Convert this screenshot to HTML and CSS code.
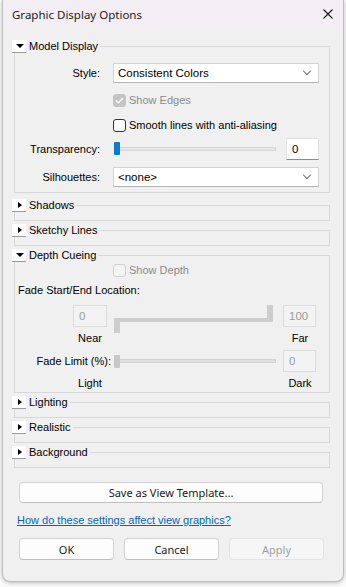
FILE: index.html
```html
<!doctype html>
<html lang="en">
  <head>
    <meta name="viewport" content="width=device-width">
    <title>Graphic Display Options</title>
    <link rel="stylesheet" href="styles.css">
  </head>
  <body>
    <div class="dialog">
      <div class="titlebar">
        <span class="title">Graphic Display Options</span>
        <svg class="close" width="10" height="10" viewBox="0 0 10 10"><path d="M0.5 0.5L9.5 9.5M9.5 0.5L0.5 9.5" stroke="#1a1a1a" stroke-width="1.1"/></svg>
      </div>

      <div class="groups">
        <!-- Model Display -->
        <div class="group model">
          <div class="group-head">
            <span class="toggle"><i class="tri-down"></i></span>
            <span class="group-label">Model Display</span>
          </div>

          <div class="form">
            <label class="lbl row-style">Style:</label>
            <div class="select row-style">Consistent Colors<i class="chev"></i></div>

            <div class="ctl row-edges">
              <span class="check checked disabled"><svg width="9" height="7" viewBox="0 0 9 7"><path d="M1 3.5L3.5 6L8 1" fill="none" stroke="#fff" stroke-width="1.2"/></svg></span>
              <span class="muted">Show Edges</span>
            </div>

            <div class="ctl row-smooth">
              <span class="check"></span>
              <span>Smooth lines with anti-aliasing</span>
            </div>

            <label class="lbl row-trans">Transparency:</label>
            <div class="ctl row-trans slider-row">
              <div class="slider">
                <div class="track"></div>
                <div class="thumb blue"></div>
              </div>
              <div class="num">0</div>
            </div>

            <label class="lbl row-sil">Silhouettes:</label>
            <div class="select row-sil">&lt;none&gt;<i class="chev"></i></div>
          </div>
        </div>

        <div class="group collapsed first">
          <div class="group-head">
            <span class="toggle"><i class="tri-right"></i></span>
            <span class="group-label">Shadows</span>
          </div>
        </div>

        <div class="group collapsed">
          <div class="group-head">
            <span class="toggle"><i class="tri-right"></i></span>
            <span class="group-label">Sketchy Lines</span>
          </div>
        </div>

        <!-- Depth Cueing -->
        <div class="group depth">
          <div class="group-head">
            <span class="toggle"><i class="tri-down"></i></span>
            <span class="group-label">Depth Cueing</span>
          </div>

          <div class="ctl show-depth">
            <span class="check disabled"></span>
            <span class="muted">Show Depth</span>
          </div>

          <div class="fade-title">Fade Start/End Location:</div>

          <div class="dgrid fade-loc">
            <div class="num off near">0</div>
            <svg class="range" width="162" height="29" viewBox="0 0 162 29">
              <rect x="0" y="13" width="159" height="4" fill="#cdcdcd"/>
              <rect x="0" y="13" width="6" height="15" fill="#cdcdcd"/>
              <rect x="153" y="0" width="6" height="17" fill="#cdcdcd"/>
            </svg>
            <div class="num off">100</div>
          </div>

          <div class="dgrid ends">
            <span class="end">Near</span>
            <span></span>
            <span class="end">Far</span>
          </div>

          <div class="dgrid fade-limit">
            <label class="lbl limit">Fade Limit (%):</label>
            <div class="slider">
              <div class="track grey"></div>
              <div class="thumb grey"></div>
            </div>
            <div class="num off">0</div>
          </div>

          <div class="dgrid ends">
            <span class="end">Light</span>
            <span></span>
            <span class="end">Dark</span>
          </div>
        </div>

        <div class="group collapsed">
          <div class="group-head">
            <span class="toggle"><i class="tri-right"></i></span>
            <span class="group-label">Lighting</span>
          </div>
        </div>

        <div class="group collapsed">
          <div class="group-head">
            <span class="toggle"><i class="tri-right"></i></span>
            <span class="group-label">Realistic</span>
          </div>
        </div>

        <div class="group collapsed">
          <div class="group-head">
            <span class="toggle"><i class="tri-right"></i></span>
            <span class="group-label">Background</span>
          </div>
        </div>
      </div>

      <div class="footer">
        <button class="btn wide">Save as View Template...</button>
        <a class="help" href="#">How do these settings affect view graphics?</a>
        <div class="buttons">
          <button class="btn">OK</button>
          <button class="btn">Cancel</button>
          <button class="btn" disabled>Apply</button>
        </div>
      </div>
    </div>
  </body>
</html>
```

FILE: styles.css
```css
* { box-sizing: border-box; }

html, body {
  margin: 0;
  height: 100%;
}

body {
  background: #fbfbfb;
  font-family: "Liberation Sans", Arial, sans-serif;
  font-size: 11px;
  color: #000;
  overflow: hidden;
}

.dialog {
  margin-left: 2px;
  width: 342px;
  height: 582px;
  background: #f0f0f0;
  border: 1px solid #bdbdbd;
  border-top: none;
  border-radius: 0 0 8px 8px;
  box-shadow: 0 1px 4px rgba(0, 0, 0, 0.25);
}

.titlebar {
  height: 28px;
  background: #f3eef4;
  display: flex;
  align-items: center;
  justify-content: space-between;
  padding: 0 10px 0 9px;
}

.title {
  font-family: "Noto Sans", sans-serif;
  font-size: 11.5px;
  color: #1b1b1b;
  margin-top: 1px;
}

.groups {
  padding-left: 11px;
  padding-top: 18px;
}

.group {
  width: 316px;
  border: 1px solid #d8d8d8;
  margin-top: 9px;
}

.group.model { margin-top: 0; height: 147px; }
.group.first { margin-top: 12px; }
.group.collapsed { height: 16px; }
.group.depth { height: 138px; margin-top: 9px; }

.group-head {
  display: flex;
  align-items: center;
  height: 13px;
  margin: -7px 0 0 -3px;
}

.toggle {
  width: 14px;
  height: 13px;
  background: #fff;
  border-bottom: 1px solid #9a9a9a;
  display: flex;
  align-items: center;
  justify-content: center;
}

.tri-down {
  width: 0;
  height: 0;
  border-left: 4px solid transparent;
  border-right: 4px solid transparent;
  border-top: 4px solid #000;
  margin-left: 1px;
}

.tri-right {
  width: 0;
  height: 0;
  border-top: 3.5px solid transparent;
  border-bottom: 3.5px solid transparent;
  border-left: 4px solid #000;
  margin-left: 1px;
}

.group-label {
  background: #f0f0f0;
  padding: 0 2px 0 3px;
  font-size: 11px;
  line-height: 13px;
}

/* model display form */
.form {
  display: grid;
  grid-template-columns: 85px 206px;
  column-gap: 13px;
  align-items: center;
  margin-top: 10px;
}

.lbl {
  display: flex;
  align-items: center;
  justify-content: flex-end;
  white-space: nowrap;
}

.row-style { grid-row: 1; height: 20px; }
.row-edges { grid-row: 2; margin-top: 10px; }
.row-smooth { grid-row: 3; margin-top: 11px; }
.row-trans { grid-row: 4; margin-top: 6px; height: 22px; }
.row-sil { grid-row: 5; margin-top: 7px; height: 20px; }

.ctl {
  grid-column: 2;
  display: flex;
  align-items: center;
  height: 14px;
}

.select {
  grid-column: 2;
  background: #fff;
  border: 1px solid #d3d3d3;
  border-bottom-color: #b4b4b4;
  display: flex;
  align-items: center;
  padding-left: 4px;
  font-size: 11.5px;
}

.chev {
  margin-left: auto;
  margin-right: 8px;
  width: 6px;
  height: 6px;
  border-right: 1px solid #777;
  border-bottom: 1px solid #777;
  transform: rotate(45deg);
  margin-top: -4px;
}

.check {
  width: 13px;
  height: 13px;
  border: 1px solid #333;
  border-radius: 3px;
  background: #fff;
  margin-right: 3px;
  display: inline-flex;
  align-items: center;
  justify-content: center;
}

.check.disabled {
  border-color: #cfcfcf;
  background: #f3f3f3;
}

.check.checked.disabled {
  background: #c4c4c4;
  border-color: #c4c4c4;
}

.muted { color: #8a8a8a; }

.slider-row {
  justify-content: space-between;
}

.slider {
  position: relative;
  width: 162px;
  height: 14px;
  margin-left: 1px;
}

.track {
  position: absolute;
  left: 3px;
  right: 0;
  top: 5px;
  height: 4px;
  background: #e6e6e6;
  border: 1px solid #d6d6d6;
}

.thumb {
  position: absolute;
  left: 0;
  top: 0;
  width: 6px;
  height: 13px;
  border-radius: 1px;
}

.thumb.blue { background: #0a78d6; }

.track.grey { background: #dedede; border-color: #d2d2d2; }
.thumb.grey { background: #c8c8c8; top: 1px; }

.num {
  width: 33px;
  height: 22px;
  background: #fff;
  border: 1px solid #e2e2e2;
  border-bottom-color: #8a8a8a;
  padding-left: 5px;
  display: flex;
  align-items: center;
  font-size: 11.5px;
}

.num.off {
  background: #f3f3f3;
  border: 1px solid #dcdcdc;
  color: #9a9a9a;
}

/* depth cueing */
.show-depth {
  margin: 1px 0 0 98px;
}

.fade-title {
  margin: 6px 0 0 3px;
  line-height: 14px;
}

.dgrid {
  display: grid;
  grid-template-columns: 92px 162px 34px;
  column-gap: 7px;
  align-items: start;
}

.fade-loc { margin-top: 8px; height: 22px; }

.near { justify-self: end; width: 34px; }

.range { display: block; }

.ends {
  margin-top: 4px;
  line-height: 14px;
}

.end {
  justify-self: end;
  width: 34px;
  text-align: center;
}

.ends .end:last-child { justify-self: start; }

.fade-limit {
  margin-top: 5px;
  align-items: center;
}

.fade-limit .slider { margin-left: 0; }

.lbl.limit { margin-right: -4px; }

/* footer */
.footer {
  padding: 14px 0 0 16px;
}

.btn {
  font-family: "Noto Sans", sans-serif;
  font-size: 11px;
  color: #1a1a1a;
  background: #fdfdfd;
  border: 1px solid #d2d2d2;
  border-bottom-color: #c0c0c0;
  border-radius: 4px;
  height: 22px;
  width: 95px;
  padding: 0;
  margin: 0;
}

.btn.wide {
  display: block;
  width: 304px;
  height: 21px;
}

.btn:disabled {
  background: #f6f6f6;
  border-color: #e3e3e3;
  color: #a0a0a0;
}

.help {
  display: block;
  margin: 11px 0 0 -2px;
  color: #0067c0;
  font-size: 11px;
  line-height: 13px;
  width: max-content;
}

.buttons {
  display: flex;
  gap: 10px;
  margin-top: 11px;
}
```
